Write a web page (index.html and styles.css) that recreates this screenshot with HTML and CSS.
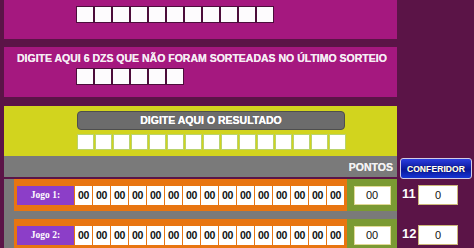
FILE: index.html
```html
<!DOCTYPE html>
<html lang="pt">
<head>
<meta charset="utf-8">
<title>Conferidor</title>
<link rel="stylesheet" href="styles.css">
</head>
<body>
<div class="page">
  <section class="panel magenta p1">
    <div class="boxes dark">
      <span></span><span></span><span></span><span></span><span></span><span></span><span></span><span></span><span></span><span></span><span></span>
    </div>
  </section>
  <section class="panel magenta p2">
    <h2 class="heading">DIGITE AQUI 6 DZS QUE NÃO FORAM SORTEADAS NO ÚLTIMO SORTEIO</h2>
    <div class="boxes dark">
      <span></span><span></span><span></span><span></span><span></span><span></span>
    </div>
  </section>
  <section class="panel yellow">
    <div class="title-bar">DIGITE AQUI O RESULTADO</div>
    <div class="boxes light">
      <span></span><span></span><span></span><span></span><span></span><span></span><span></span><span></span><span></span><span></span><span></span><span></span><span></span><span></span><span></span>
    </div>
  </section>
  <div class="row head">
    <div class="grey"><span class="pontos">PONTOS</span></div>
    <div class="side"><button class="btn">CONFERIDOR</button></div>
  </div>
  <div class="row game">
    <div class="grey">
      <div class="orange">
        <div class="label">Jogo 1:</div>
        <div class="cells"><span>00</span><span>00</span><span>00</span><span>00</span><span>00</span><span>00</span><span>00</span><span>00</span><span>00</span><span>00</span><span>00</span><span>00</span><span>00</span><span>00</span><span>00</span></div>
      </div>
      <div class="green"><div class="score">00</div></div>
    </div>
    <div class="side"><span class="num">11</span><div class="count">0</div></div>
  </div>
  <div class="row game">
    <div class="grey">
      <div class="orange">
        <div class="label">Jogo 2:</div>
        <div class="cells"><span>00</span><span>00</span><span>00</span><span>00</span><span>00</span><span>00</span><span>00</span><span>00</span><span>00</span><span>00</span><span>00</span><span>00</span><span>00</span><span>00</span><span>00</span></div>
      </div>
      <div class="green"><div class="score">00</div></div>
    </div>
    <div class="side"><span class="num">12</span><div class="count">0</div></div>
  </div>
</div>
</body>
</html>
```
FILE: styles.css
```css
html, body {
  margin: 0;
  padding: 0;
}
body {
  width: 474px;
  height: 248px;
  overflow: hidden;
  background: #5b1447;
  font-family: "Liberation Sans", Arial, sans-serif;
}
.page {
  display: flex;
  flex-direction: column;
}
.panel {
  width: 393px;
  margin-left: 4px;
  box-sizing: border-box;
}
.magenta {
  background: #a5187f;
}
.p1 {
  height: 39px;
  padding: 6px 0 0 72px;
  margin-bottom: 8px;
}
.p2 {
  height: 50px;
  padding: 5px 0 0 72px;
  margin-bottom: 9px;
}
.heading {
  margin: 0 0 4px -59px;
  width: 369px;
  text-align: center;
  font-size: 10.5px;
  line-height: 12px;
  font-weight: bold;
  color: #f6ecf4;
  white-space: nowrap;
  text-shadow: 0 0 0.4px #f6ecf4;
}
.boxes {
  display: flex;
  width: max-content;
}
.boxes.dark {
  background: #4c0d3b;
  padding: 1px;
  gap: 2px;
}
.boxes.dark span {
  width: 16px;
  height: 15px;
  background: #fdfbfd;
}
.yellow {
  background: #d2d41e;
  height: 50px;
  padding: 5px 0 0 73px;
}
.title-bar {
  width: 268px;
  height: 19px;
  box-sizing: border-box;
  background: #6c6c6c;
  border: 1px solid #4e4e4e;
  border-radius: 4px;
  color: #fff;
  font-weight: bold;
  font-size: 10.5px;
  line-height: 17px;
  text-align: center;
  margin-bottom: 4px;
  text-shadow: 0 0 0.4px #fff;
}
.boxes.light {
  gap: 1px;
}
.boxes.light span {
  width: 17px;
  height: 16px;
  box-sizing: border-box;
  background: #fff;
  border: 1px solid #b9d36c;
}
.row {
  display: flex;
}
.grey {
  width: 393px;
  margin-left: 4px;
  background: #7a7a7a;
  box-sizing: border-box;
  display: flex;
}
.side {
  flex: 1;
  display: flex;
  align-items: flex-start;
  padding-left: 3px;
}
.head .grey {
  height: 21px;
  justify-content: flex-end;
  align-items: center;
  padding-right: 4px;
}
.pontos {
  color: #f2f2f2;
  font-weight: bold;
  font-size: 10.5px;
  text-shadow: 0 0 0.4px #f2f2f2;
}
.btn {
  margin: 2px 0 0 0;
  width: 72px;
  height: 21px;
  padding: 0;
  border: 1px solid #d2cce6;
  border-radius: 3px;
  background: linear-gradient(#2a3ee0, #0a1798 55%, #1634d4);
  color: #fff;
  font-family: "Liberation Sans", Arial, sans-serif;
  font-weight: bold;
  font-size: 8.5px;
  letter-spacing: 0.1px;
  text-shadow: 0 0 1px #000, 0 0 0.4px #fff;
}
.game .grey {
  height: 40px;
  padding: 0 0 8px 10px;
}
.orange {
  width: 333px;
  height: 32px;
  background: #e87511;
  display: flex;
  align-items: center;
  padding: 0 3px;
  box-sizing: border-box;
  gap: 1px;
}
.label {
  width: 57px;
  height: 19px;
  background: #8c3ec8;
  color: #fff;
  font-family: "Liberation Serif", "Times New Roman", serif;
  font-weight: bold;
  font-size: 9.5px;
  line-height: 19px;
  text-align: center;
}
.cells {
  display: flex;
  gap: 1px;
}
.cells span {
  width: 17px;
  height: 19px;
  background: #fff;
  color: #111;
  font-weight: bold;
  font-size: 10.5px;
  line-height: 19px;
  text-align: center;
  letter-spacing: -0.3px;
}
.green {
  flex: 1;
  height: 32px;
  background: #7b9a33;
  display: flex;
  align-items: center;
  justify-content: center;
}
.score, .count {
  height: 19px;
  box-sizing: border-box;
  background: #fff;
  text-align: center;
  font-size: 11px;
  line-height: 17px;
  color: #111;
}
.score {
  width: 37px;
  border: 1px solid #e2da98;
}
.side .num {
  margin-top: 7px;
  color: #fff;
  font-weight: bold;
  font-size: 13px;
  line-height: 15px;
  width: 16px;
  margin-left: 2px;
}
.count {
  margin-top: 6px;
  width: 40px;
  height: 20px;
  border: 1px solid #cdb97a;
  line-height: 18px;
}
```
